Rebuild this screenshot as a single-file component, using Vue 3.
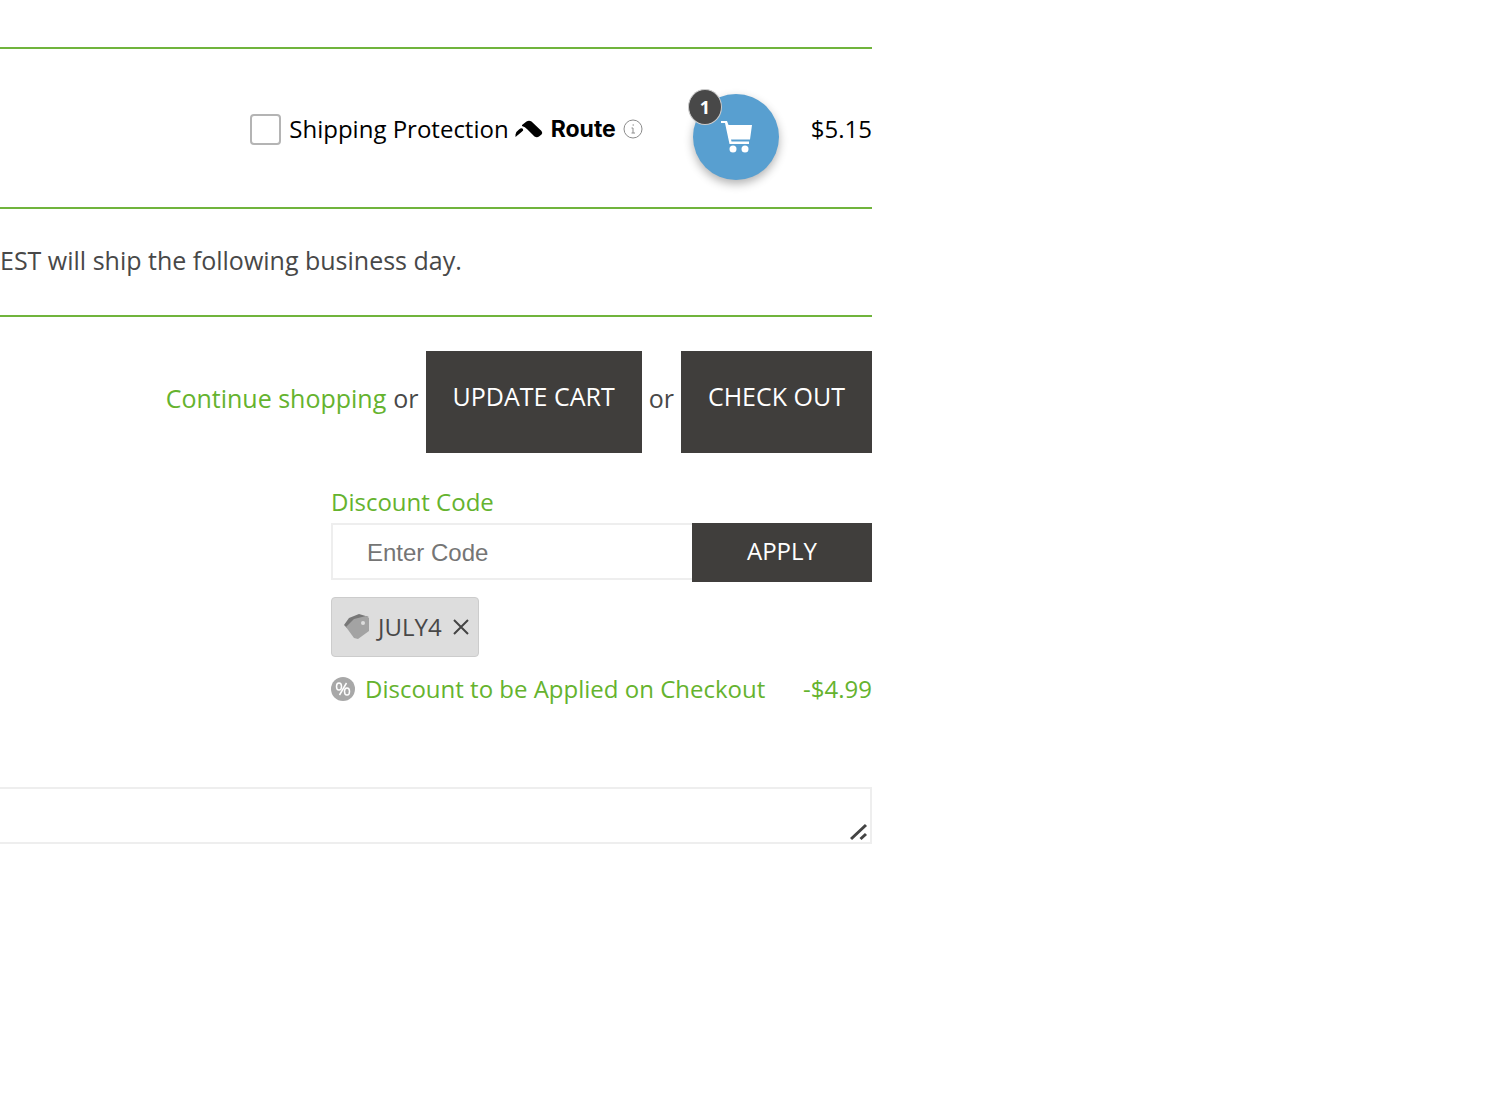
<script setup>
import { ref } from 'vue'

const protectedShipping = ref(false)
const code = ref('')
const note = ref('')
const coupons = ref(['JULY4'])
const removeCoupon = (name) => {
  coupons.value = coupons.value.filter((c) => c !== name)
}
</script>

<template>
  <main class="cart">
    <section class="row protection">
      <label class="check">
        <input v-model="protectedShipping" type="checkbox" />
        <span>Shipping Protection</span>
      </label>
      <span class="route">
        <svg class="route-mark" viewBox="0 0 28 18" aria-hidden="true">
          <path d="M7 5 11.500 1.500Q14 0 16.500 1.500L26.500 11Q28 13 26.500 14.500L24 16.500Q22 18 19.500 16.500L12.500 9.500Q10 6.500 7 6Z" />
          <path d="M.5 17V14.500Q1 11.500 4 9.500 6.500 7.500 8 9 9 10.500 6.500 12Z" />
        </svg>
        <span>Route</span>
      </span>
      <button class="info" type="button" aria-label="About shipping protection">
        <svg viewBox="0 0 20 20" aria-hidden="true">
          <circle cx="10" cy="10" r="9" />
          <path d="M8.500 9h1.500v5M8.500 14h3.500M9.500 6h1.500" />
        </svg>
      </button>
      <button class="bubble" type="button" aria-label="Open cart">
        <svg viewBox="0 0 34 34" aria-hidden="true">
          <path d="M2 1h6l1.500 4H33l-2 14.500H12l.5 2H30V24H10.500L6 3H2Z" />
          <circle cx="14" cy="29" r="3.500" />
          <circle cx="26" cy="29" r="3.500" />
        </svg>
        <span class="badge">1</span>
      </button>
      <span class="price">$5.15</span>
    </section>

    <p class="row notice">EST will ship the following business day.</p>

    <section class="actions">
      <a class="word" href="#">Continue shopping</a>
      <span class="word">or</span>
      <button class="dark" type="button">UPDATE CART</button>
      <span class="word">or</span>
      <button class="dark" type="button">CHECK OUT</button>
    </section>

    <section class="discount">
      <label class="green" for="code">Discount Code</label>
      <form class="code" @submit.prevent>
        <input id="code" v-model="code" type="text" placeholder="Enter Code" />
        <button class="dark" type="submit">APPLY</button>
      </form>
      <div v-for="c in coupons" :key="c" class="coupon">
        <svg class="tag" viewBox="0 0 26 26" aria-hidden="true">
          <path fill="#777" d="M0 11 5 4 15 0 25 3 10 6 3 14Z" />
          <path fill="#a3a3a3" d="M2 13 10 5 22 2 25 4V17L14 25 10 24Z" />
          <circle cx="19" cy="9" r="2" fill="#ddd" />
        </svg>
        <span>{{ c }}</span>
        <button type="button" :aria-label="`Remove ${c}`" @click="removeCoupon(c)">
          <svg viewBox="0 0 16 16" aria-hidden="true"><path d="M1 1 15 15M15 1 1 15" /></svg>
        </button>
      </div>
      <div class="summary green">
        <svg viewBox="0 0 24 24" aria-hidden="true">
          <circle cx="12" cy="12" r="12" fill="#a8a8a8" />
          <g fill="none" stroke="#fff" stroke-width="1.500">
            <ellipse cx="8" cy="9.500" rx="2.500" ry="3.500" />
            <ellipse cx="16" cy="14.500" rx="2.500" ry="3.500" />
            <path d="M15.500 6 8.500 18" />
          </g>
        </svg>
        <span>Discount to be Applied on Checkout</span>
        <span class="amount">-$4.99</span>
      </div>
    </section>

    <div class="note">
      <textarea v-model="note" aria-label="Order note"></textarea>
      <svg viewBox="0 0 18 18" aria-hidden="true"><path d="M1 16 16 2M10.500 16l5.500-5" /></svg>
    </div>
  </main>
</template>

<style>
body {
  margin: 0;
  background: #fff;
}
</style>

<style scoped>
.cart {
  box-sizing: border-box;
  padding: 47px 628px 0 0;
  font: 25px/36px "Open Sans", sans-serif;
  color: #484848;
}
* {
  box-sizing: border-box;
}
button {
  border: 0;
  padding: 0;
  background: none;
  font: inherit;
  color: inherit;
  cursor: pointer;
}
svg {
  display: block;
}
.row {
  border-top: 2px solid #70b43c;
}
.protection {
  display: flex;
  align-items: center;
  justify-content: flex-end;
  height: 160px;
  padding-top: 2px;
  font-size: 24px;
  color: #000;
}
.check {
  display: flex;
  align-items: center;
  gap: 8px;
}
.check input {
  appearance: none;
  width: 31px;
  height: 31px;
  margin: 0;
  border: 2px solid #b4b4b4;
  border-radius: 4px;
  background: #fff;
}
.check input:checked {
  background: #70b43c;
}
.route {
  display: flex;
  align-items: center;
  gap: 8px;
  margin-left: 6px;
  font: bold 23px/36px Inter, sans-serif;
}
.route-mark {
  width: 28px;
  height: 18px;
}
.info {
  margin-left: 7px;
}
.info svg {
  width: 20px;
  height: 20px;
  fill: none;
  stroke: #8c8c8c;
  stroke-width: 1;
}
.bubble {
  position: relative;
  width: 86px;
  height: 86px;
  margin: 16px 32px 0 50px;
  border-radius: 50%;
  background: #589fd0;
  box-shadow: 0 4px 10px rgba(0, 0, 0, 0.3);
}
.bubble svg {
  width: 34px;
  height: 34px;
  margin: 0 auto;
  fill: #fff;
}
.badge {
  position: absolute;
  top: -5px;
  left: -5px;
  width: 34px;
  height: 36px;
  border: 1px solid #ccc;
  border-radius: 50%;
  background: #484848;
  color: #fff;
  font: bold 18px/34px "Open Sans", sans-serif;
  text-align: center;
}
.notice {
  margin: 0;
  padding: 33px 0 37px;
  border-bottom: 2px solid #70b43c;
  white-space: nowrap;
}
.actions {
  display: flex;
  align-items: center;
  justify-content: flex-end;
  gap: 7px;
  padding-top: 34px;
}
.word {
  padding-bottom: 8px;
}
a,
.green {
  color: #65b32e;
  text-decoration: none;
}
.dark {
  background: #403e3c;
  color: #fff;
}
.actions .dark {
  height: 102px;
  padding: 0 27px 12px;
}
.discount {
  width: 541px;
  margin: 31px 0 0 auto;
  font-size: 24px;
}
.discount > label {
  display: block;
}
.code {
  display: flex;
  margin-top: 3px;
}
.code input {
  flex: 1;
  min-width: 0;
  height: 57px;
  padding: 2px 34px 0;
  border: 2px solid #eee;
  border-right: 0;
  border-radius: 0;
  background: #fff;
  font: 24px "Liberation Sans", Arial, sans-serif;
  color: #484848;
}
.code input::placeholder {
  color: #757575;
}
.code .dark {
  width: 180px;
  height: 59px;
  padding-bottom: 4px;
}
.coupon {
  display: flex;
  align-items: center;
  width: max-content;
  height: 60px;
  margin-top: 15px;
  padding: 0 9px 0 12px;
  border: 1px solid #ccc;
  border-radius: 4px;
  background: #ddd;
}
.tag {
  width: 26px;
  height: 26px;
  margin-right: 8px;
}
.coupon button {
  margin-left: 11px;
}
.coupon button svg {
  width: 16px;
  height: 16px;
  fill: none;
  stroke: #444;
  stroke-width: 2;
}
.summary {
  display: flex;
  align-items: center;
  gap: 10px;
  margin-top: 14px;
}
.summary svg {
  width: 24px;
  height: 24px;
}
.amount {
  margin-left: auto;
}
.note {
  position: relative;
  margin-top: 80px;
}
.note textarea {
  display: block;
  width: 100%;
  height: 57px;
  border: 2px solid #eee;
  border-left: 0;
  resize: none;
  font: inherit;
}
.note svg {
  position: absolute;
  right: 4px;
  bottom: 3px;
  width: 18px;
  height: 18px;
  stroke: #444;
  stroke-width: 3;
}
</style>
